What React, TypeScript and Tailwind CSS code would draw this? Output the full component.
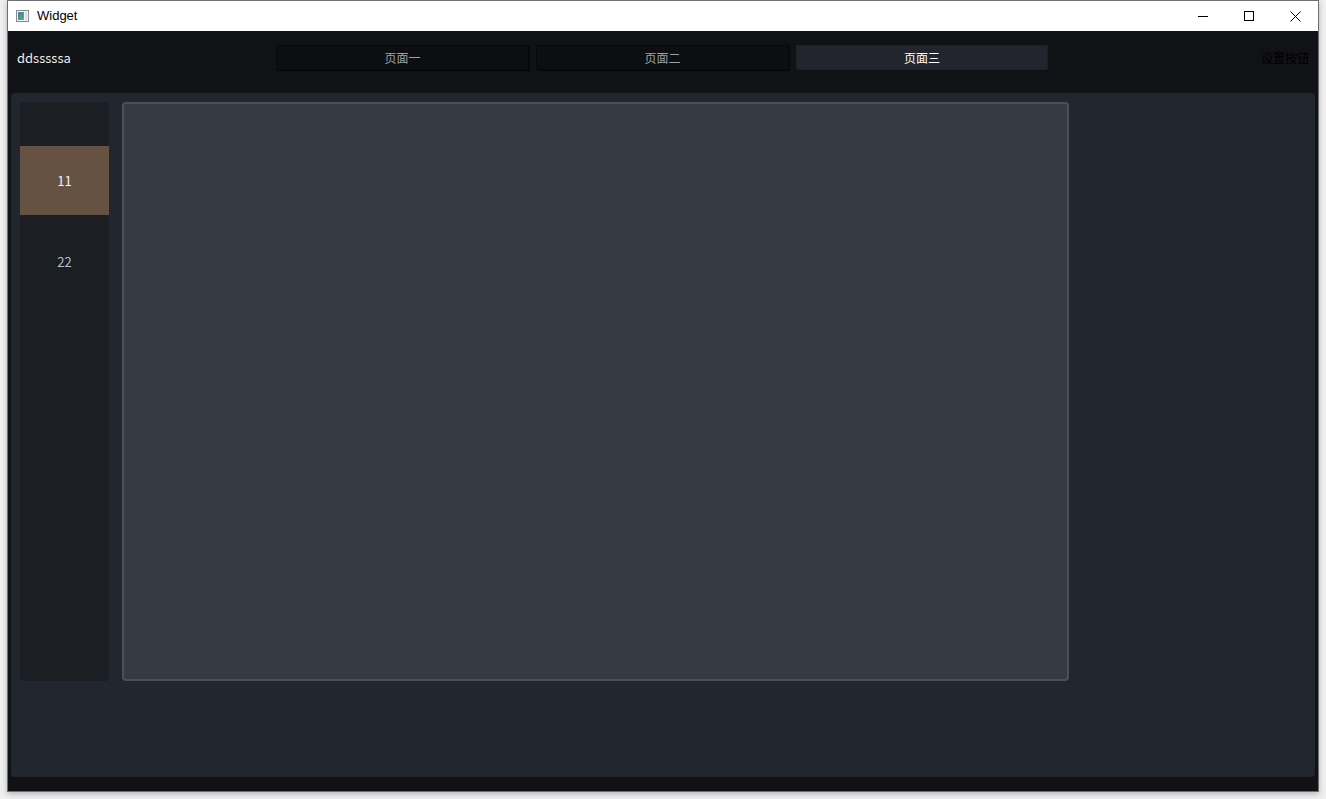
import React from "react";

const font = { fontFamily: '"Noto Sans CJK SC", "Liberation Sans", sans-serif' };

export default function App() {
  return (
    <div className="w-[1326px] h-[799px] bg-[#f0f0f0] pl-[7px] overflow-hidden" style={{ fontFamily: '"Liberation Sans", "Noto Sans CJK SC", sans-serif' }}>
      <div className="w-[1312px] h-[792px] border border-[#6e6e6e] flex flex-col bg-[#111216] shadow-[0_2px_6px_rgba(0,0,0,0.25)]">
        {/* Title bar */}
        <div className="h-[30px] bg-white flex items-center shrink-0">
          <div className="pl-[8px] flex items-center">
            <svg width="13" height="12" viewBox="0 0 13 12">
              <rect x="0.5" y="0.5" width="12" height="11" fill="#f4f4f4" stroke="#8a8a8a" />
              <defs>
                <linearGradient id="g" x1="0" y1="0" x2="1" y2="1">
                  <stop offset="0" stopColor="#3a7fa8" />
                  <stop offset="1" stopColor="#5fb07a" />
                </linearGradient>
              </defs>
              <rect x="2" y="2" width="6" height="8" fill="url(#g)" />
              <rect x="9" y="2" width="2" height="8" fill="#d8dde2" />
            </svg>
          </div>
          <span className="ml-[8px] text-[13px] text-black" style={{ fontFamily: '"Liberation Sans", sans-serif' }}>Widget</span>
          <div className="flex-1" />
          <div className="flex h-full">
            <div className="w-[46px] h-full flex items-center justify-center">
              <svg width="10" height="10" viewBox="0 0 10 10"><line x1="0" y1="5.5" x2="10" y2="5.5" stroke="#000" strokeWidth="1" /></svg>
            </div>
            <div className="w-[46px] h-full flex items-center justify-center">
              <svg width="10" height="10" viewBox="0 0 10 10"><rect x="0.5" y="0.5" width="9" height="9" fill="none" stroke="#000" strokeWidth="1" /></svg>
            </div>
            <div className="w-[46px] h-full flex items-center justify-center">
              <svg width="11" height="11" viewBox="0 0 11 11"><path d="M0.5 0.5 L10.5 10.5 M10.5 0.5 L0.5 10.5" stroke="#000" strokeWidth="1" /></svg>
            </div>
          </div>
        </div>

        {/* Header */}
        <div className="h-[53px] flex items-center shrink-0">
          <div className="w-[268px] pl-[9px] text-[13px] text-[#ececec]" style={font}>ddsssssa</div>
          <div className="flex gap-[7px]">
            <button className="w-[253px] h-[25px] bg-[#0d0e11] border border-[#08090b] shadow-[1px_1px_0_#060709] text-[12px] text-[#9ea3aa] flex items-center justify-center" style={font}>页面一</button>
            <button className="w-[253px] h-[25px] bg-[#0d0e11] border border-[#08090b] shadow-[1px_1px_0_#060709] text-[12px] text-[#9ea3aa] flex items-center justify-center" style={font}>页面二</button>
            <button className="w-[252px] h-[25px] bg-[#22252d] border border-[#1c1f25] text-[12px] text-white flex items-center justify-center" style={font}>页面三</button>
          </div>
          <div className="flex-1" />
          <div className="pr-[9px] text-[12px] text-black" style={font}>设置按钮</div>
        </div>

        {/* Main panel */}
        <div className="mt-[9px] mx-[3px] h-[684px] bg-[#22262e] rounded-[4px] pt-[9px] pl-[9px] flex gap-[13px] items-start">
          <div className="w-[89px] h-[579px] bg-[#1b1e23] rounded-[4px] pt-[44px] flex flex-col gap-[12px]">
            <div className="h-[69px] bg-[#655243] flex items-center justify-center text-[13px] text-[#f2f2f2]" style={font}>11</div>
            <div className="h-[69px] flex items-center justify-center text-[13px] text-[#b7c1cd]" style={font}>22</div>
          </div>
          <div className="w-[947px] h-[579px] bg-[#363a43] border-2 border-[#4b505a] rounded-[4px]" />
        </div>
      </div>
    </div>
  );
}
